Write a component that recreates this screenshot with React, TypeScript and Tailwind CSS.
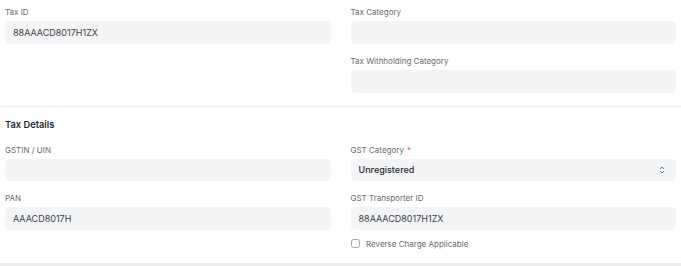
import React from 'react';

const font = { fontFamily: 'Inter, "Noto Sans", sans-serif' };

function Label({ text, required }: { text: string; required?: boolean }) {
  return (
    <div className="h-[14px] leading-[14px] mb-[2px] text-[8px] text-[#636b73]">
      {text}
      {required && <span className="text-[#e24c4c] ml-[3px]">*</span>}
    </div>
  );
}

function Field({ label, value, required }: { label: string; value?: string; required?: boolean }) {
  return (
    <div>
      <Label text={label} required={required} />
      <div className="h-[22.5px] rounded-[5px] bg-[#f3f4f6] px-[8px] flex items-center text-[9px] text-[#3b4047]">
        {value}
      </div>
    </div>
  );
}

function SelectField({ label, value }: { label: string; value: string }) {
  return (
    <div>
      <Label text={label} required />
      <div className="h-[22.5px] rounded-[5px] bg-[#f3f4f6] pl-[8px] pr-[11px] flex items-center justify-between text-[9px] font-medium text-[#1f272e]">
        <span>{value}</span>
        <svg width="6" height="10" viewBox="0 0 6 10" fill="none" stroke="#6b7280" strokeWidth="1" strokeLinecap="round" strokeLinejoin="round">
          <path d="M1.4 3.6 L3 2 L4.6 3.6" />
          <path d="M1.4 6.4 L3 8 L4.6 6.4" />
        </svg>
      </div>
    </div>
  );
}

export default function App() {
  return (
    <div className="w-[681px] h-[266px] bg-white overflow-hidden flex flex-col" style={font}>
      <div className="grid grid-cols-2 gap-x-[20px] px-[5px] pt-[5px] pb-[13px] border-b border-[#ededed]">
        <div>
          <Field label="Tax ID" value="88AAACD8017H1ZX" />
        </div>
        <div className="flex flex-col gap-[10.5px]">
          <Field label="Tax Category" />
          <Field label="Tax Withholding Category" />
        </div>
      </div>
      <div className="px-[5px] pt-[11px] flex-1 border-b-[3px] border-[#ebebeb]">
        <div className="h-[14px] leading-[14px] text-[9.3px] font-semibold text-[#1f272e] mb-[11px]">Tax Details</div>
        <div className="grid grid-cols-2 gap-x-[20px]">
          <div className="flex flex-col gap-[10px]">
            <Field label="GSTIN / UIN" />
            <Field label="PAN" value="AAACD8017H" />
          </div>
          <div className="flex flex-col gap-[10px]">
            <SelectField label="GST Category" value="Unregistered" />
            <Field label="GST Transporter ID" value="88AAACD8017H1ZX" />
            <div className="flex items-center gap-[6px] -mt-[2px]">
              <span className="w-[9.5px] h-[9.5px] rounded-[2.5px] border border-[#a0a6ad] bg-white" />
              <span className="text-[8px] text-[#636b73]">Reverse Charge Applicable</span>
            </div>
          </div>
        </div>
      </div>
    </div>
  );
}
